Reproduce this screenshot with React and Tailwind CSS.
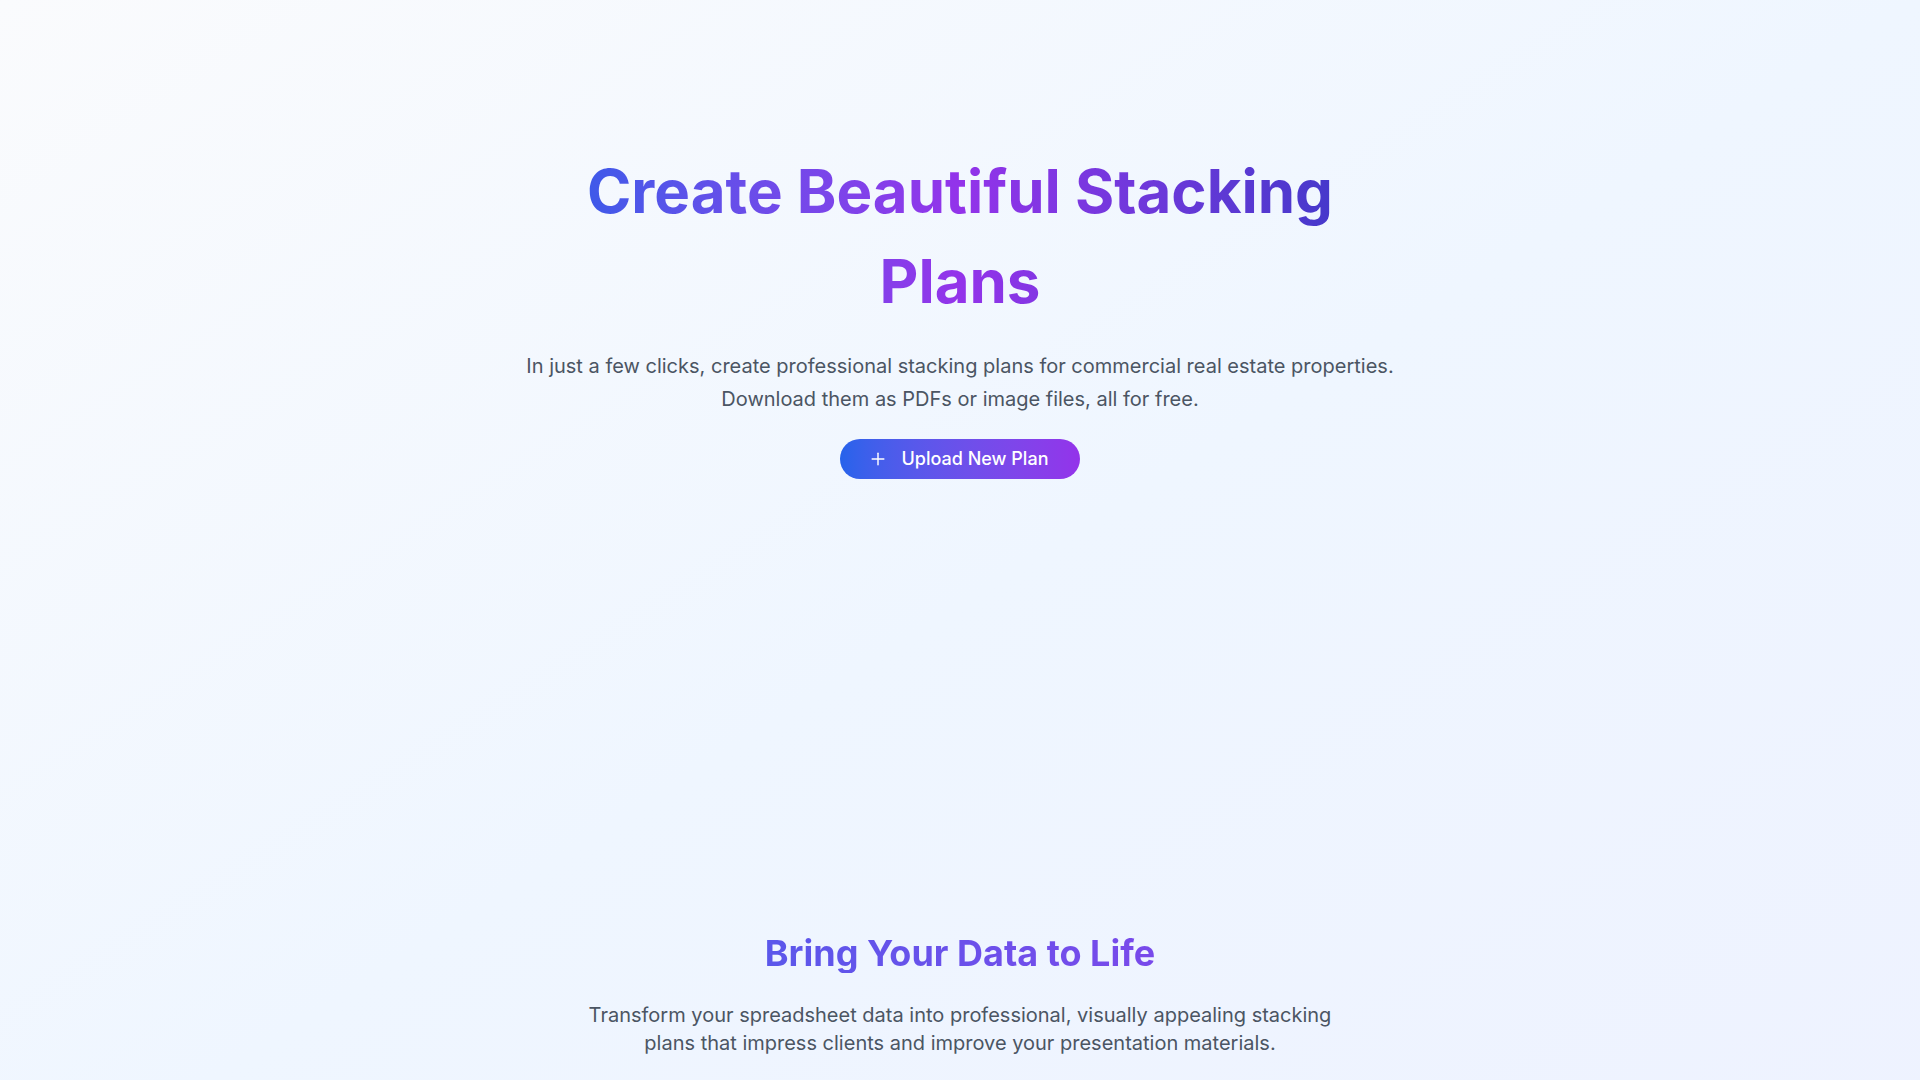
import { Plus } from 'lucide-react'

// Landing hero for the stacking plan builder
export default function App() {
  return (
    <div className="min-h-screen bg-linear-to-br from-[#fafbfd] via-[#eff6ff] to-[#eef2ff] font-['Inter',sans-serif] pb-40">
      {/* Hero */}
      <section className="flex flex-col items-center px-4 pt-[146px] text-center">
        <h1 className="mb-6 max-w-3xl bg-linear-to-r from-[#3a5ae9] via-[#9333ea] to-[#4338ca] bg-clip-text text-6xl font-bold leading-normal text-transparent">
          Create Beautiful Stacking Plans
        </h1>
        <p className="mb-6 max-w-4xl text-xl leading-relaxed text-[#4b5563]">
          In just a few clicks, create professional stacking plans for commercial real estate properties.
          Download them as PDFs or image files, all for free.
        </p>
        <button className="inline-flex items-center gap-[14px] rounded-full bg-linear-to-r from-[#2563eb] to-[#9333ea] py-1.5 pl-7 pr-8 text-lg font-medium text-white">
          <Plus className="h-5 w-5" strokeWidth={1.75} />
          Upload New Plan
        </button>
      </section>

      {/* Features intro */}
      <section className="mx-auto mt-[454px] w-full max-w-7xl px-4 text-center">
        <h2 className="mb-7 bg-linear-to-r from-[#2563eb] to-[#9333ea] bg-clip-text text-4xl font-bold text-transparent">
          Bring Your Data to Life
        </h2>
        <p className="mx-auto max-w-3xl text-xl text-[#4b5563]">
          Transform your spreadsheet data into professional, visually appealing stacking plans that impress
          clients and improve your presentation materials.
        </p>
      </section>
    </div>
  )
}
